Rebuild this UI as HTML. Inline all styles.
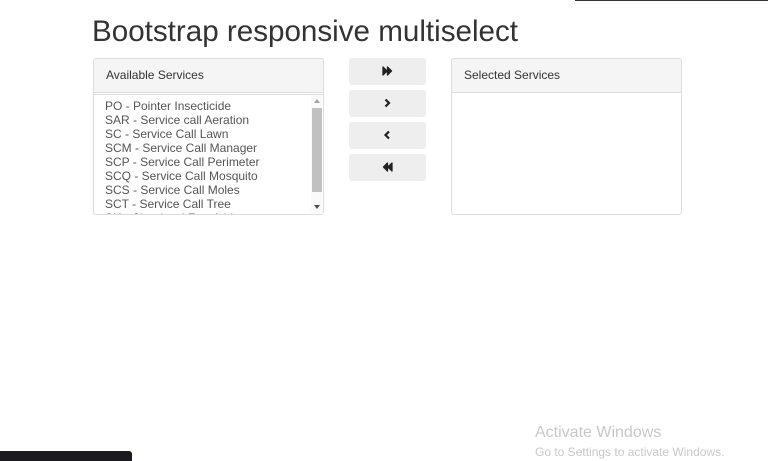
<!DOCTYPE html>
<html><head><style>
body{margin:0;width:768px;height:461px;background:#fff;font-family:"Liberation Sans",sans-serif;position:relative;overflow:hidden;color:#333}
.topline{position:absolute;left:575px;top:0;width:193px;height:1px;background:#333}
h1{position:absolute;left:92px;top:15px;margin:0;font-size:29.6px;font-weight:normal;color:#333}
.panel{position:absolute;top:58px;width:229px;height:155px;border:1px solid #ddd;border-radius:3px;background:#fff;overflow:hidden}
.ph{height:33px;background:#f5f5f5;border-bottom:1px solid #ddd;font-size:12px;line-height:33px;padding-left:12px;color:#333}
.list{position:absolute;left:0;top:35px;width:229px;height:120px;border-top:1px solid #ddd;overflow:hidden;padding-top:4px;box-sizing:border-box}
.list div.i{font-size:12px;line-height:14px;padding-left:11px;color:#555;white-space:nowrap}
.sb{position:absolute;left:217px;top:0;width:11px;height:118px;background:#fafafa}
.thumb{position:absolute;left:1px;top:13px;width:10px;height:84px;background:#c1c1c1}
.btn{position:absolute;left:349px;width:77px;height:27px;background:#eee;border-radius:3px}
.btn svg{position:absolute;left:33px;top:8px}
.aw{position:absolute;left:535px;top:424px;font-size:16px;color:#c8c8c8}
.aw2{position:absolute;left:535px;top:445px;font-size:12px;color:#c8c8c8}
.bar{position:absolute;left:0;top:451px;width:132px;height:10px;background:#1b1b1f;border-radius:0 3px 0 0}
</style></head><body>
<div class="topline"></div>
<h1>Bootstrap responsive multiselect</h1>
<div class="panel" style="left:93px">
<div class="ph">Available Services</div>
<div class="list">
<div class="i">PO - Pointer Insecticide</div>
<div class="i">SAR - Service call Aeration</div>
<div class="i">SC - Service Call Lawn</div>
<div class="i">SCM - Service Call Manager</div>
<div class="i">SCP - Service Call Perimeter</div>
<div class="i">SCQ - Service Call Mosquito</div>
<div class="i">SCS - Service Call Moles</div>
<div class="i">SCT - Service Call Tree</div>
<div class="i">SH - Shepherd Fungicide</div>
<div class="sb"><div class="thumb"></div>
<svg style="position:absolute;left:3px;top:4px" width="6" height="4"><path d="M0 4L3 0L6 4Z" fill="#a3a3a3"/></svg>
<svg style="position:absolute;left:3px;top:110px" width="6" height="4"><path d="M0 0L3 4L6 0Z" fill="#505050"/></svg>
</div>
</div>
</div>
<div class="btn" style="top:58px"><svg width="11" height="10"><path d="M1 1L5 5L1 9Z M5.5 1L9.5 5L5.5 9Z" fill="#222" stroke="#222" stroke-width="1.3" stroke-linejoin="round"/></svg></div>
<div class="btn" style="top:90px"><svg width="11" height="10"><path d="M3.5 1.5L7 5L3.5 8.5" fill="none" stroke="#222" stroke-width="2.2"/></svg></div>
<div class="btn" style="top:122px"><svg width="11" height="10"><path d="M7 1.5L3.5 5L7 8.5" fill="none" stroke="#222" stroke-width="2.2"/></svg></div>
<div class="btn" style="top:154px"><svg width="11" height="10"><path d="M5.5 1L1.5 5L5.5 9Z M10 1L6 5L10 9Z" fill="#222" stroke="#222" stroke-width="1.3" stroke-linejoin="round"/></svg></div>
<div class="panel" style="left:451px">
<div class="ph">Selected Services</div>
</div>
<div class="aw">Activate Windows</div>
<div class="aw2">Go to Settings to activate Windows.</div>
<div class="bar"></div>
</body></html>
